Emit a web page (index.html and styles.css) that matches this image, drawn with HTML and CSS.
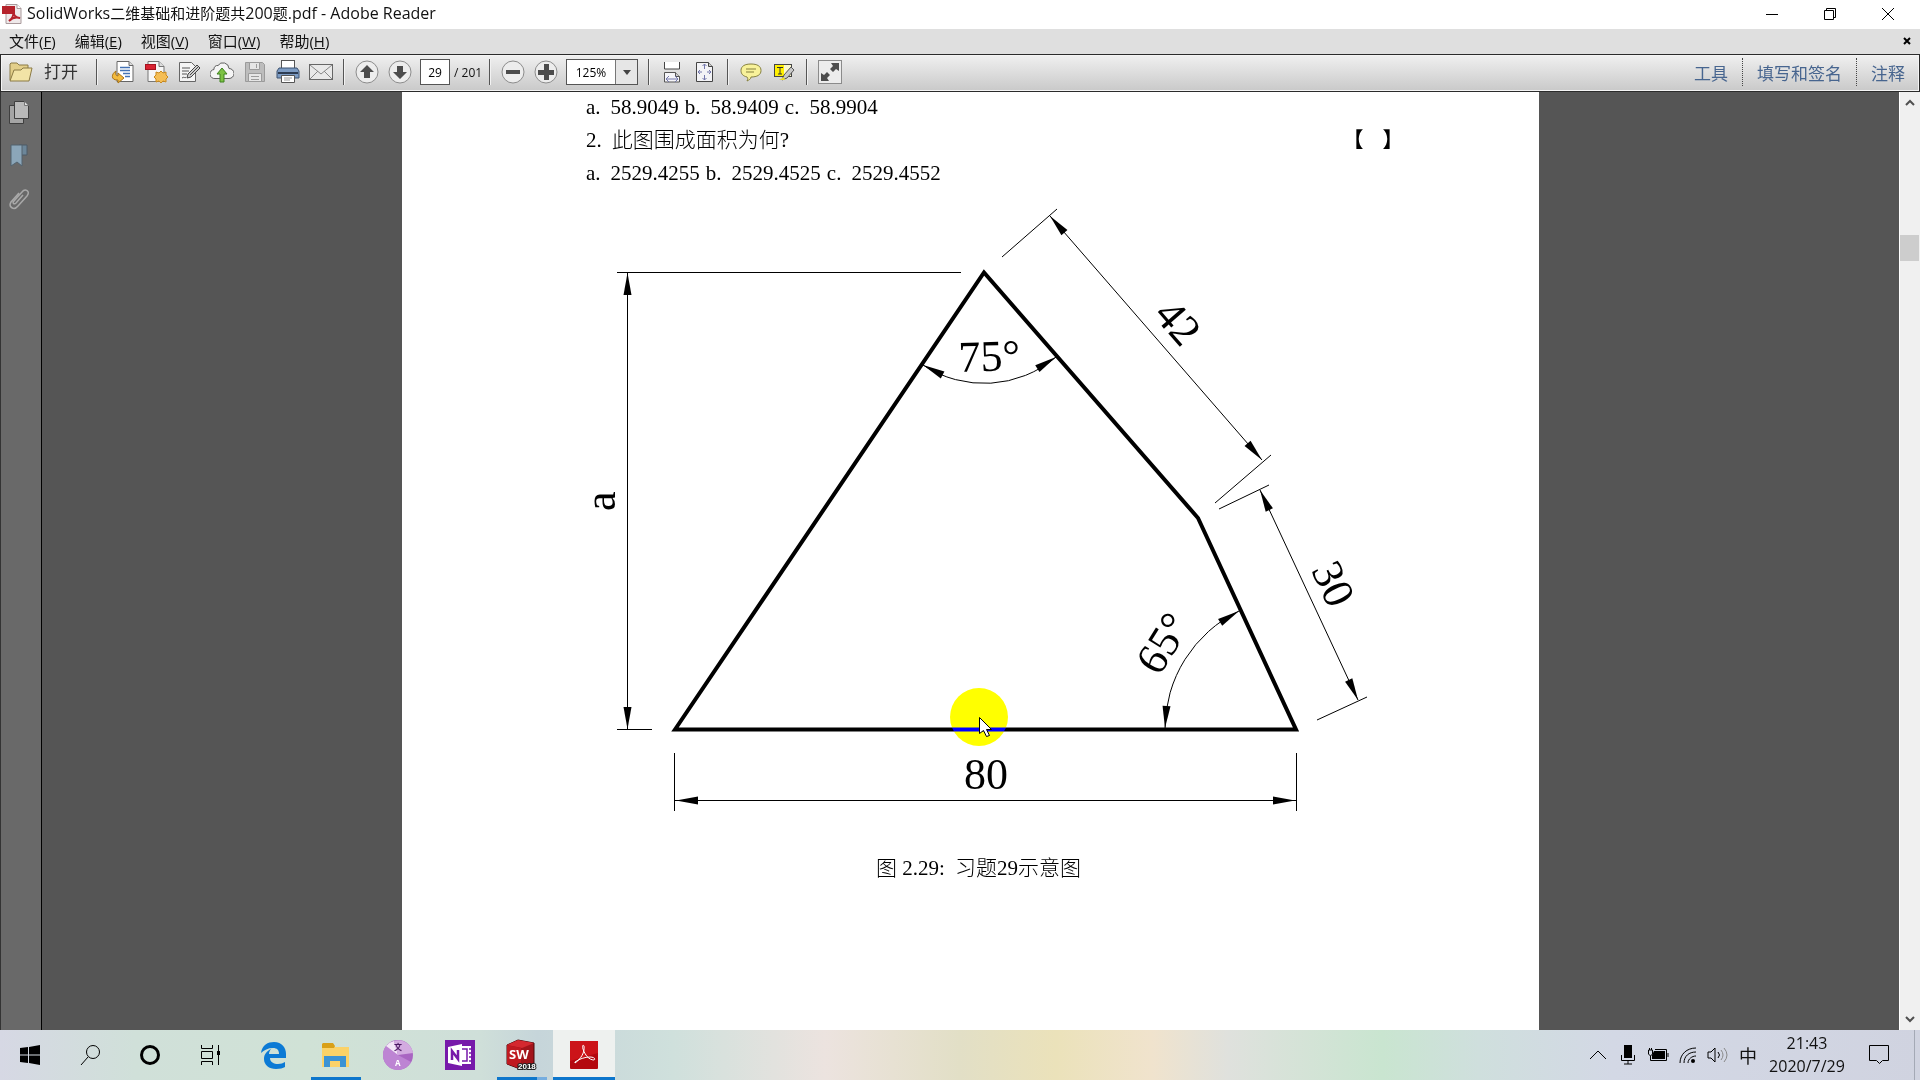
FILE: index.html
```html
<!DOCTYPE html>
<html lang="zh-CN">
<head>
    <meta charset="UTF-8">
    <meta name="viewport" content="width=device-width, initial-scale=1.0">
    <title>SolidWorks二维基础和进阶题共200题.pdf - Adobe Reader</title>
    <link rel="stylesheet" href="styles.css">
</head>
<body>
    <header class="titlebar">
        <svg class="app-icon" width="20" height="20" viewBox="0 0 20 20">
            <path d="M4 0.500h11l4 4v15H4z" fill="#efe9ea" stroke="#a99a9c"/>
            <path d="M15 0.500v4h4" fill="#fff" stroke="#a99a9c"/>
            <rect x="0" y="2" width="13" height="8" fill="#b5222b"/>
            <path d="M7 17c3-2 5-6 4-10 0 4 3 7 7 7-4-1-8 0-11 3z" fill="none" stroke="#b5222b" stroke-width="2"/>
        </svg>
        <h1 class="title">SolidWorks<span>二维基础和进阶题共</span>200<span>题</span>.pdf - Adobe Reader</h1>
        <div class="window-buttons">
            <button aria-label="最小化"><svg width="12" height="12" viewBox="0 0 12 12"><path d="M0 6.500h12"/></svg></button>
            <button aria-label="还原"><svg width="12" height="12" viewBox="0 0 12 12"><path d="M0.500 2.500h9v9h-9zM2.500 2V0.500h9v9H10"/></svg></button>
            <button aria-label="关闭"><svg width="12" height="12" viewBox="0 0 12 12"><path d="M0 0l12 12M12 0L0 12"/></svg></button>
        </div>
    </header>

    <nav class="menubar">
        <button>文件(<u>F</u>)</button>
        <button>编辑(<u>E</u>)</button>
        <button>视图(<u>V</u>)</button>
        <button>窗口(<u>W</u>)</button>
        <button>帮助(<u>H</u>)</button>
        <button class="close-doc" aria-label="关闭文档"><svg width="8" height="8" viewBox="0 0 8 8"><path d="M1 1l6 6M7 1L1 7" stroke="#000" stroke-width="2"/></svg></button>
    </nav>

    <div class="toolbar">
        <button class="open">
            <svg width="24" height="20" viewBox="0 0 24 20">
                <path d="M1 18V2l1-1h6l2 2h9v4" fill="#e3cf8a" stroke="#8b7a45"/>
                <path d="M1 19L5 8h7l2-2h9l-3 13z" fill="#f2e3a6" stroke="#8b7a45"/>
            </svg>
            <span>打开</span>
        </button>
        <i class="sep"></i>
        <div class="group files">
            <button aria-label="转换">
                <svg width="24" height="24" viewBox="0 0 24 24">
                    <path d="M6 1.500h12l4 4v16H6z" fill="#fff" stroke="#666"/>
                    <path d="M18 1.500v4h4" fill="#ddd" stroke="#666"/>
                    <path d="M9 7.500h10M9 10.500h10M12 13.500h7M14 16.500h5" stroke="#4573b5" stroke-width="1.500"/>
                    <path d="M5 11c-5 3-5 9 1 9h1v3l6-5-6-5v3c-2 0-3-2-2-5z" fill="#f3bb3e" stroke="#a97418"/>
                </svg>
            </button>
            <button aria-label="创建 PDF">
                <svg width="24" height="24" viewBox="0 0 24 24">
                    <path d="M4 1.500h11l5 5v15H4z" fill="#f6f6f6" stroke="#777"/>
                    <path d="M15 1.500v5h5" fill="#ddd" stroke="#777"/>
                    <rect x="1.500" y="4.500" width="10" height="5" fill="#d92332" stroke="#a5121f"/>
                    <path d="M17 11l2 2 3-1v3l2 2-2 2v3l-3-1-2 2-2-2-3 1v-3l-2-2 2-2v-3l3 1z" fill="#f5be55" stroke="#c98a1f"/>
                </svg>
            </button>
            <button aria-label="签名">
                <svg width="24" height="24" viewBox="0 0 24 24">
                    <path d="M2.500 2.500h12l4 4v15h-16z" fill="#f4f4f4" stroke="#666"/>
                    <path d="M5 8h8M5 11h7M5 14h5M5 18c2-2 3 1 4-1" fill="none" stroke="#555"/>
                    <path d="M10 18l1-4 9-9 3 3-9 9z" fill="#cfcfcf" stroke="#444"/>
                    <path d="M13 15l8-8" stroke="#444"/>
                </svg>
            </button>
            <button aria-label="上传">
                <svg width="24" height="24" viewBox="0 0 24 24">
                    <path d="M5 18.500a4.500 4.500 0 0 1-1-9 3.500 3.500 0 0 1 4-4 6 6 0 0 1 11 3 5 5 0 0 1 0 10z" fill="#f5f5f5" stroke="#606060"/>
                    <path d="M12 8l5 6h-3v8h-4v-8H7z" fill="#7cc243" stroke="#3f8221"/>
                </svg>
            </button>
            <button aria-label="保存" disabled>
                <svg width="24" height="24" viewBox="0 0 24 24">
                    <path d="M2.500 2.500h17l2 2v17h-19z" fill="#bdbdbd" stroke="#9b9b9b"/>
                    <path d="M6.500 2.500h10v7h-10zM5.500 13.500h13v8h-13z" fill="#e6e6e6" stroke="#9b9b9b"/>
                    <path d="M13.500 4v4M8 16.500h8M8 19.500h8" stroke="#9b9b9b"/>
                </svg>
            </button>
            <button aria-label="打印">
                <svg width="24" height="24" viewBox="0 0 24 24">
                    <rect x="5.500" y="0.500" width="13" height="9" fill="#fff" stroke="#555"/>
                    <path d="M3 8h18l2 3v7H1v-7z" fill="#7d9cc4" stroke="#3d5270"/>
                    <path d="M2 13h20" stroke="#2d3c52" stroke-width="2"/>
                    <path d="M5.500 15.500h13v7h-13z" fill="#fff" stroke="#555"/>
                    <path d="M8 18h8M8 20h6" stroke="#999"/>
                </svg>
            </button>
            <button aria-label="邮件">
                <svg width="24" height="24" viewBox="0 0 24 24">
                    <rect x="0.500" y="4.500" width="23" height="15" fill="#e9e9e9" stroke="#666"/>
                    <path d="M1 5l11 9 11-9M1 19l8-8M23 19l-8-8" fill="none" stroke="#888"/>
                </svg>
            </button>
        </div>
        <i class="sep"></i>
        <div class="group">
            <button aria-label="上一页"><svg width="24" height="24" viewBox="0 0 24 24"><circle cx="12" cy="12" r="11" class="disc"/><path d="M12 5l7 7h-4v6H9v-6H5z" fill="#4c4c4c"/></svg></button>
            <button aria-label="下一页"><svg width="24" height="24" viewBox="0 0 24 24"><circle cx="12" cy="12" r="11" class="disc"/><path d="M12 19l7-7h-4V6H9v6H5z" fill="#4c4c4c"/></svg></button>
            <input class="page-number" type="text" value="29" aria-label="页码">
            <span class="page-total">/ 201</span>
        </div>
        <i class="sep"></i>
        <div class="group">
            <button aria-label="缩小"><svg width="24" height="24" viewBox="0 0 24 24"><circle cx="12" cy="12" r="11" class="disc"/><path d="M5 10h14v4H5z" fill="#4c4c4c"/></svg></button>
            <button aria-label="放大"><svg width="24" height="24" viewBox="0 0 24 24"><circle cx="12" cy="12" r="11" class="disc"/><path d="M4 10h6V4h5v6h5v5h-5v5h-5v-5H4z" fill="#4c4c4c"/></svg></button>
            <div class="zoom">
                <select aria-label="缩放"><option>125%</option></select>
                <span class="zoom-arrow"><svg width="8" height="5" viewBox="0 0 8 5"><path d="M0 0h8L4 5z" fill="#444"/></svg></span>
            </div>
        </div>
        <i class="sep"></i>
        <div class="group">
            <button aria-label="适合宽度">
                <svg width="24" height="24" viewBox="0 0 24 24">
                    <path d="M4.500 2v7h15V2" fill="#fff" stroke="#444"/>
                    <path d="M4.500 22v-9.500h11l4 4V22z" fill="#f5f5f8" stroke="#555"/>
                    <path d="M15.500 12.500v4h4" fill="#ccc" stroke="#555"/>
                    <path d="M6 19h12M9 16l-3 3 3 3M15 16l3 3-3 3" fill="none" stroke="#7377ab"/>
                </svg>
            </button>
            <button aria-label="整页">
                <svg width="24" height="24" viewBox="0 0 24 24">
                    <path d="M3.500 2.500h12l4 4v15h-16z" fill="#f3f3f6" stroke="#444"/>
                    <path d="M15.500 2.500v4h4" fill="#ccc" stroke="#444"/>
                    <path d="M11.500 4v5M11.500 15v5M5 12h4M14 12h4M9.500 6l2-2 2 2M9.500 18l2 2 2-2M7 10l-2 2 2 2M16 10l2 2-2 2" fill="none" stroke="#7377ab"/>
                </svg>
            </button>
        </div>
        <i class="sep"></i>
        <div class="group">
            <button aria-label="批注">
                <svg width="24" height="24" viewBox="0 0 24 24">
                    <path d="M12 4c6 0 10 2 10 6.500S18 17 12 17c0 2-2 3-4 4 1-2 1-3 0-4-4-1-6-3-6-6.500C2 6 6 4 12 4z" fill="#f8f29a" stroke="#85803f"/>
                    <path d="M7 9h10M7 12h8" stroke="#85803f"/>
                </svg>
            </button>
            <button aria-label="高亮文本">
                <svg width="24" height="24" viewBox="0 0 24 24">
                    <rect x="2.500" y="4.500" width="17" height="12" fill="#fbf9cf" stroke="#444"/>
                    <path d="M3 5h9v11H3z" fill="#ffef00"/>
                    <path d="M5 7.500h6M8 7v7M6 14h4" stroke="#333"/>
                    <path d="M10 20l2-5 7-8 3 3-7 8z" fill="#c9c9c9" stroke="#555"/>
                    <path d="M7 20h6l-1-3z" fill="#e8dc2a"/>
                </svg>
            </button>
        </div>
        <i class="sep"></i>
        <div class="group">
            <button aria-label="阅读模式">
                <svg width="24" height="24" viewBox="0 0 24 24">
                    <rect x="0.500" y="0.500" width="23" height="23" fill="#ececec" stroke="#8b8b8b"/>
                    <path d="M21 3v8l-3-2-3 3-3-3 3-3-2-3zM3 21v-8l3 2 3-3 3 3-3 3 2 3z" fill="#4c4c4c"/>
                </svg>
            </button>
        </div>
        <div class="panes">
            <button>工具</button>
            <button>填写和签名</button>
            <button>注释</button>
        </div>
    </div>

    <main class="reader">
        <aside class="rail">
            <button aria-label="页面缩略图">
                <svg width="22" height="24" viewBox="0 0 22 24">
                    <path d="M1.500 4.500h14v18h-14z" fill="#a5a5a5" stroke="#3f3f3f"/>
                    <path d="M6.500 0.500h10l4 4v13h-14z" fill="#bababa" stroke="#3f3f3f"/>
                    <path d="M16.500 0.500v4h4" fill="#e0e0e0" stroke="#777"/>
                </svg>
            </button>
            <button aria-label="书签">
                <svg width="22" height="24" viewBox="0 0 22 24">
                    <path d="M11 1h8v10h-8z" fill="#6c8699" stroke="#4c5b66"/>
                    <path d="M3 1h11v21l-5-4-6 4z" fill="#8ba6b9" stroke="#53636f"/>
                </svg>
            </button>
            <button aria-label="附件">
                <svg width="22" height="24" viewBox="0 0 22 24">
                    <path d="M15 8l-7 8c-2 2-4 0-2-2l8-9c3-4 9-1 5 4l-9 10c-4 5-10 1-7-4l8-9" fill="none" stroke="#a9a9a9" stroke-width="1.500"/>
                </svg>
            </button>
        </aside>

        <section class="viewport">
            <article class="page">
                <ul class="exercise">
                    <li class="options">
                        <span><b>a.</b>58.9049</span>
                        <span><b>b.</b>58.9409</span>
                        <span><b>c.</b>58.9904</span>
                    </li>
                    <li class="question">
                        <span><b>2.</b>此图围成面积为何?</span>
                        <span class="blank"><i>【</i><i>】</i></span>
                    </li>
                    <li class="options">
                        <span><b>a.</b>2529.4255</span>
                        <span><b>b.</b>2529.4525</span>
                        <span><b>c.</b>2529.4552</span>
                    </li>
                </ul>
                <figure>
                    <svg class="drawing" viewBox="564 191 829 661">
                        <defs>
                            <path id="arrow" d="M0 0L-22 -4V4z"/>
                        </defs>

                        <!-- outline -->
                        <path class="outline" d="M675 729.500L984 272.500 1198 518l98 211.500z"/>

                        <!-- a -->
                        <path class="thin" d="M617 272.500h344M617 729.500h35M627.500 273v456"/>
                        <use href="#arrow" transform="translate(627.500 273) rotate(-90)"/>
                        <use href="#arrow" transform="translate(627.500 729) rotate(90)"/>
                        <text transform="translate(615 511) rotate(-90)">a</text>

                        <!-- 80 -->
                        <path class="thin" d="M674.500 753v58M1296.500 753v58M675 800.500h621"/>
                        <use href="#arrow" transform="translate(676 800.500) rotate(180)"/>
                        <use href="#arrow" transform="translate(1295 800.500)"/>
                        <text class="mid" x="986" y="789">80</text>

                        <!-- 42 -->
                        <path class="thin" d="M1002 257l55-48M1215 503l56-48M1050 216l212 244"/>
                        <use href="#arrow" transform="translate(1050 216) rotate(229)"/>
                        <use href="#arrow" transform="translate(1262 460) rotate(49)"/>
                        <text class="mid" transform="translate(1167 332) rotate(49)">42</text>

                        <!-- 30 -->
                        <path class="thin" d="M1219 509l50-24M1317 720l50-23M1260 490l98 210"/>
                        <use href="#arrow" transform="translate(1260 490) rotate(245)"/>
                        <use href="#arrow" transform="translate(1358 700) rotate(65)"/>
                        <text class="mid" transform="translate(1320 590) rotate(65)">30</text>

                        <!-- angles -->
                        <path class="thin" d="M923 365A111 111 0 0 0 1056 357M1165 729A131 131 0 0 1 1239 611"/>
                        <use href="#arrow" transform="translate(923 365) rotate(207)"/>
                        <use href="#arrow" transform="translate(1056 357) rotate(-32)"/>
                        <use href="#arrow" transform="translate(1165 728) rotate(94)"/>
                        <use href="#arrow" transform="translate(1239 611) rotate(-31)"/>
                        <text transform="translate(959 372) rotate(-2)">75°</text>
                        <text transform="translate(1159 677) rotate(-58)">65°</text>

                        <!-- pointer -->
                        <circle class="spot" cx="979" cy="717" r="29"/>
                        <path class="pointer" d="M979.500 717.500v16l4-3 3 6 3-1-3-6h5z"/>
                    </svg>
                    <figcaption><span>图 2.29:</span><span>习题29示意图</span></figcaption>
                </figure>
            </article>
        </section>

        <div class="scrollbar">
            <svg width="10" height="7" viewBox="0 0 10 7"><path d="M1 6l4-4 4 4"/></svg>
            <div class="track"><div class="thumb"></div></div>
            <svg width="10" height="7" viewBox="0 0 10 7"><path d="M1 1l4 4 4-4"/></svg>
        </div>
    </main>

    <footer class="taskbar">
        <div class="system">
            <button aria-label="开始"><svg width="20" height="20" viewBox="0 0 20 20"><path d="M0 3l8-1v7.500H0zM9 2l11-2v9.500H9zM0 10.500h8V18l-8-1zM9 10.500h11V20L9 18z"/></svg></button>
            <button aria-label="搜索"><svg width="20" height="20" viewBox="0 0 20 20"><path d="M1 20l7-8" class="line"/><circle cx="13" cy="7" r="6.500" class="line"/></svg></button>
            <button aria-label="Cortana"><svg width="20" height="20" viewBox="0 0 20 20"><circle cx="10" cy="10" r="8.500" fill="none" stroke="#000" stroke-width="3"/></svg></button>
            <button aria-label="任务视图"><svg width="20" height="20" viewBox="0 0 20 20"><path d="M1.500 0v3.500h11V0M1.500 20v-3.500h11V20M1.500 6.500h11v7h-11zM18.500 0v20" class="line"/><path d="M17 6h3v4h-3z"/></svg></button>
        </div>
        <div class="apps">
            <button aria-label="Edge">
                <svg width="26" height="28" viewBox="0 0 26 28"><path d="M0 12C1 4 7 1 13 1c8 0 12 6 12 12v4H9c0 4 4 6 8 6 3 0 5-1 7-2v5c-2 1-5 2-9 2C8 28 3 24 3 18c0-5 3-8 7-10-1 1-2 3-2 5h10c0-4-2-6-6-6C7 7 3 9 0 12z" fill="#0c7ad5"/></svg>
            </button>
            <button class="running" aria-label="文件资源管理器">
                <svg width="28" height="24" viewBox="0 0 28 24">
                    <path d="M0 1h11l2 3h14v20H0z" fill="#fbd268"/><path d="M0 1l1-1h10l2 3-1 2H0z" fill="#d9a018"/>
                    <path d="M2 24V13h22v11h-6v-6h-10v6z" fill="#3c93d4"/>
                </svg>
            </button>
            <button aria-label="翻译">
                <svg width="30" height="30" viewBox="0 0 30 30">
                    <circle cx="15" cy="15" r="15" fill="#a965c2"/>
                    <path d="M15 15L3 6A15 15 0 0 0 15 30c5 0 10-3 13-8z" fill="#bd84d3"/>
                    <path d="M15 15L3 6A15 15 0 0 1 11 1z" fill="#f3e6f7"/>
                    <path d="M15 15L11 1c9-3 18 4 19 12z" fill="#d3abe0"/>
                    <text x="11" y="10" class="glyph" fill="#4a1761">文</text>
                    <text x="12" y="26" class="glyph" fill="#fff">A</text>
                </svg>
            </button>
            <button aria-label="OneNote">
                <svg width="30" height="30" viewBox="0 0 30 30">
                    <rect width="30" height="30" fill="#7719aa"/>
                    <path d="M15 6h11v18H15z" fill="#fff"/>
                    <path d="M17 9h5v12h-5M24 9h3M24 13h3M24 17h3M24 21h3" fill="none" stroke="#7719aa" stroke-width="1.500"/>
                    <path d="M3 7l14-3v22L3 23z" fill="#fff"/>
                    <path d="M7 20v-9l6 8v-9" fill="none" stroke="#7719aa" stroke-width="2.500"/>
                </svg>
            </button>
            <button class="running stacked" aria-label="SolidWorks 2018">
                <svg width="32" height="34" viewBox="0 -2 32 34">
                    <path d="M1 5L12 0l16 3v20l-14 6L1 24z" fill="#a3141b" stroke="#4a0a0d"/>
                    <path d="M1 5L12 0l16 3-12 5z" fill="#d4282f"/>
                    <path d="M1 5l14 3v21L1 24z" fill="#bf1a21"/>
                    <text x="3" y="19" class="sw">SW</text>
                    <text x="12" y="29" class="year">2018</text>
                </svg>
            </button>
            <button class="running active" aria-label="Adobe Reader">
                <svg width="28" height="28" viewBox="0 0 28 28">
                    <rect width="28" height="28" rx="1" fill="#b4090f"/>
                    <path d="M0 0h28v12L0 20z" fill="#cc1419"/>
                    <path d="M5 22c6-4 10-11 9-17-1-2-2 0-1 3 2 6 6 11 11 11 2-1 0-3-4-3-5 0-11 2-15 5z" fill="none" stroke="#fff"/>
                </svg>
            </button>
        </div>
        <div class="tray">
            <button aria-label="显示隐藏的图标"><svg width="18" height="20" viewBox="0 0 18 20"><path d="M1 14l8-8 8 8" class="line"/></svg></button>
            <button aria-label="麦克风"><svg width="16" height="20" viewBox="0 0 16 20"><path d="M4 0h8v13H4z"/><path d="M1.500 10v5.500h13V10M8 15v4M4 19h8" class="line"/></svg></button>
            <button aria-label="电池"><svg width="22" height="20" viewBox="0 0 22 20"><path d="M7 6h11v8H5v-4z"/><path d="M8 4.500h11.500v11h-16V11M1.500 5h4v4l-2 2-2-2zM2.500 3v2M4.500 3v2M21 8v4" class="line"/></svg></button>
            <button aria-label="网络"><svg width="18" height="20" viewBox="0 0 18 20"><path d="M1 18C1 9 8 3 17 3M5 18C5 11 10 7 17 7M9 18c0-4 4-7 8-7" class="line"/><circle cx="14" cy="16" r="2"/></svg></button>
            <button aria-label="音量"><svg width="22" height="20" viewBox="0 0 22 20"><path d="M1 7h3l4-4v14l-4-4H1z" class="line"/><path d="M11 7q3 3 0 6" class="line"/><path d="M14 5q4 5 0 10M17 3q6 7 0 14" fill="none" stroke="#888"/></svg></button>
            <button class="ime">中</button>
            <button class="clock"><time>21:43</time><time>2020/7/29</time></button>
            <button class="notice" aria-label="通知"><svg width="21" height="20" viewBox="0 0 21 20"><path d="M0.500 0.500h19v15h-6l-3 3-3-3h-7z" class="line"/></svg></button>
            <button class="desktop" aria-label="显示桌面"></button>
        </div>
    </footer>
</body>
</html>
```
FILE: styles.css
```css
* {
    box-sizing: border-box;
    margin: 0;
    padding: 0;
}

body {
    display: flex;
    flex-direction: column;
    height: 100vh;
    overflow: hidden;
    font-family: "Open Sans", "Noto Sans CJK SC", sans-serif;
    font-size: 15px;
    color: #111;
    background: #fff;
}

button {
    display: flex;
    align-items: center;
    justify-content: center;
    border: none;
    background: none;
    font: inherit;
    color: inherit;
}

svg {
    flex: none;
}

.line {
    fill: none;
    stroke: #000;
}

/* title bar */
.titlebar {
    display: flex;
    align-items: center;
    height: 29px;
    padding: 0 3px 2px 2px;
}

.title {
    margin-left: 5px;
    font-size: 16px;
    font-weight: 400;
    line-height: 27px;
}

.title span {
    font-size: 15px;
}

.window-buttons {
    display: flex;
    height: 27px;
    margin-left: auto;
}

.window-buttons button {
    width: 58px;
}

.window-buttons svg {
    fill: none;
    stroke: #000;
}

/* menu */
.menubar {
    display: flex;
    align-items: center;
    gap: 19px;
    height: 25px;
    padding: 0 9px 2px;
    background: #dfdfdf;
}

.close-doc {
    margin-left: auto;
}

/* toolbar */
.toolbar {
    display: flex;
    align-items: center;
    height: 38px;
    padding: 0 0 2px 8px;
    border: 1px solid #2b2b2b;
    background: linear-gradient(#f0f0f0, #c9c9c9);
    box-shadow: inset 0 0 0 1px #f4f4f4;
}

.open {
    gap: 11px;
    margin-right: 12px;
    font-size: 17px;
    line-height: 22px;
    color: #333;
}

.sep {
    width: 2px;
    height: 26px;
    margin: 0 5px 0 6px;
    border-left: 1px solid #555;
    border-right: 1px solid #f2f2f2;
}

.group {
    display: flex;
    align-items: center;
}

.group button {
    width: 33px;
    height: 32px;
}

.files {
    padding-left: 3px;
}

.disc {
    fill: #ededed;
    stroke: #8c8c8c;
}

.page-number {
    width: 30px;
    height: 26px;
    margin: 0 4px;
    border: 1px solid #555;
    background: #fff;
    font: 12px "Open Sans", sans-serif;
    text-align: center;
}

.page-total {
    width: 29px;
    font-size: 12px;
    white-space: nowrap;
}

.zoom {
    display: flex;
    width: 72px;
    height: 26px;
    margin: 0 4px;
    border: 1px solid #555;
    background: #fff;
}

.zoom select {
    flex: 1;
    appearance: none;
    border: none;
    background: #fff;
    font: 12px "Open Sans", sans-serif;
    text-align: center;
}

.zoom-arrow {
    display: flex;
    align-items: center;
    justify-content: center;
    width: 22px;
    border-left: 1px solid #777;
    background: #e6e6e6;
}

.panes {
    display: flex;
    margin-left: auto;
}

.panes button {
    height: 28px;
    padding: 0 14px;
    font-size: 17px;
    color: #47658f;
}

.panes button + button {
    border-left: 1px dotted #444;
}

/* reader */
.reader {
    flex: 1;
    display: flex;
    min-height: 0;
}

.rail {
    display: flex;
    flex-direction: column;
    align-items: center;
    gap: 19px;
    width: 42px;
    padding: 9px 4px 0 0;
    border-left: 1px solid #333;
    border-right: 1px solid #000;
    background: #696969;
}

.viewport {
    flex: 1;
    display: flex;
    justify-content: center;
    overflow: hidden;
    background: #555;
}

.page {
    width: 100%;
    max-width: 1137px;
    padding: 0 146px 0 162px;
    background: #fff;
    font-family: "Liberation Serif", "Noto Sans CJK SC", serif;
    font-size: 21px;
    color: #000;
}

.exercise {
    padding-left: 22px;
    list-style: none;
}

.exercise li {
    display: flex;
    height: 33px;
    line-height: 31px;
}

.exercise b {
    margin-right: 10px;
    font-weight: 400;
}

.options {
    gap: 6px;
}

.question {
    justify-content: space-between;
    font-weight: 300;
}

.blank {
    display: flex;
    gap: 19px;
    font-weight: 700;
    font-feature-settings: "halt";
}

.blank i {
    font-style: normal;
}

.drawing {
    display: block;
    width: 100%;
    font-size: 44px;
}

.outline {
    fill: none;
    stroke: #000;
    stroke-width: 4;
}

.thin {
    fill: none;
    stroke: #000;
}

.mid {
    text-anchor: middle;
}

.spot {
    fill: #00f;
    mix-blend-mode: difference;
}

.pointer {
    fill: #fff;
    stroke: #000;
}

figcaption {
    display: flex;
    justify-content: center;
    gap: 10px;
    line-height: 33px;
    font-weight: 300;
}

.scrollbar {
    display: flex;
    flex-direction: column;
    align-items: center;
    width: 21px;
    padding: 7px 0;
    border-left: 1px solid #fff;
    background: #f0f0f0;
}

.scrollbar svg {
    fill: none;
    stroke: #505050;
    stroke-width: 2;
}

.track {
    flex: 1;
    width: 100%;
    padding: 129px 1px 0 0;
}

.thumb {
    height: 26px;
    background: #cdcdcd;
}

/* taskbar */
.taskbar {
    display: flex;
    height: 50px;
    background: linear-gradient(90deg, #d6d8e4 0, #d0e0d9 7%, #d0e2d6 16%, #cfdfd9 25%, #c6d5da 28%, #cfe0dc 35%, #ece3df 43%, #e2dfc6 50%, #ebe2ba 55%, #f0e3cd 60%, #dfe1dd 64%, #c9e5d0 72%, #cfdfdd 77%, #d3d8e5 84%, #d0d3e0 100%);
}

.system,
.apps,
.tray {
    display: flex;
}

.system button {
    width: 60px;
}

.apps {
    margin-left: 3px;
}

.apps button {
    position: relative;
    width: 62px;
}

.running::after {
    content: "";
    position: absolute;
    left: 6px;
    right: 6px;
    bottom: 0;
    height: 3px;
    background: #0d76cc;
}

.stacked::after {
    background: linear-gradient(90deg, #0d76cc 80%, #76addf 80%);
}

.active {
    background: #eef1ef;
}

.active::after {
    left: 0;
    right: 0;
}

.glyph {
    font-size: 8px;
    font-weight: 700;
}

.sw {
    font-size: 13px;
    font-weight: 700;
    fill: #fff;
}

.year {
    font-family: "Liberation Sans", sans-serif;
    font-size: 8px;
    font-weight: 700;
    fill: #fff;
    stroke: #222;
    stroke-width: 2;
    paint-order: stroke;
}

.tray {
    margin-left: auto;
}

.tray button {
    width: 30px;
}

.tray .ime {
    font-size: 18px;
}

.tray .clock {
    flex-direction: column;
    width: 88px;
    font-size: 16px;
    line-height: 23px;
}

.tray .notice {
    width: 56px;
    margin-right: 7px;
}

.tray .desktop {
    width: 6px;
    border-left: 1px solid #a4a9b5;
}
```
